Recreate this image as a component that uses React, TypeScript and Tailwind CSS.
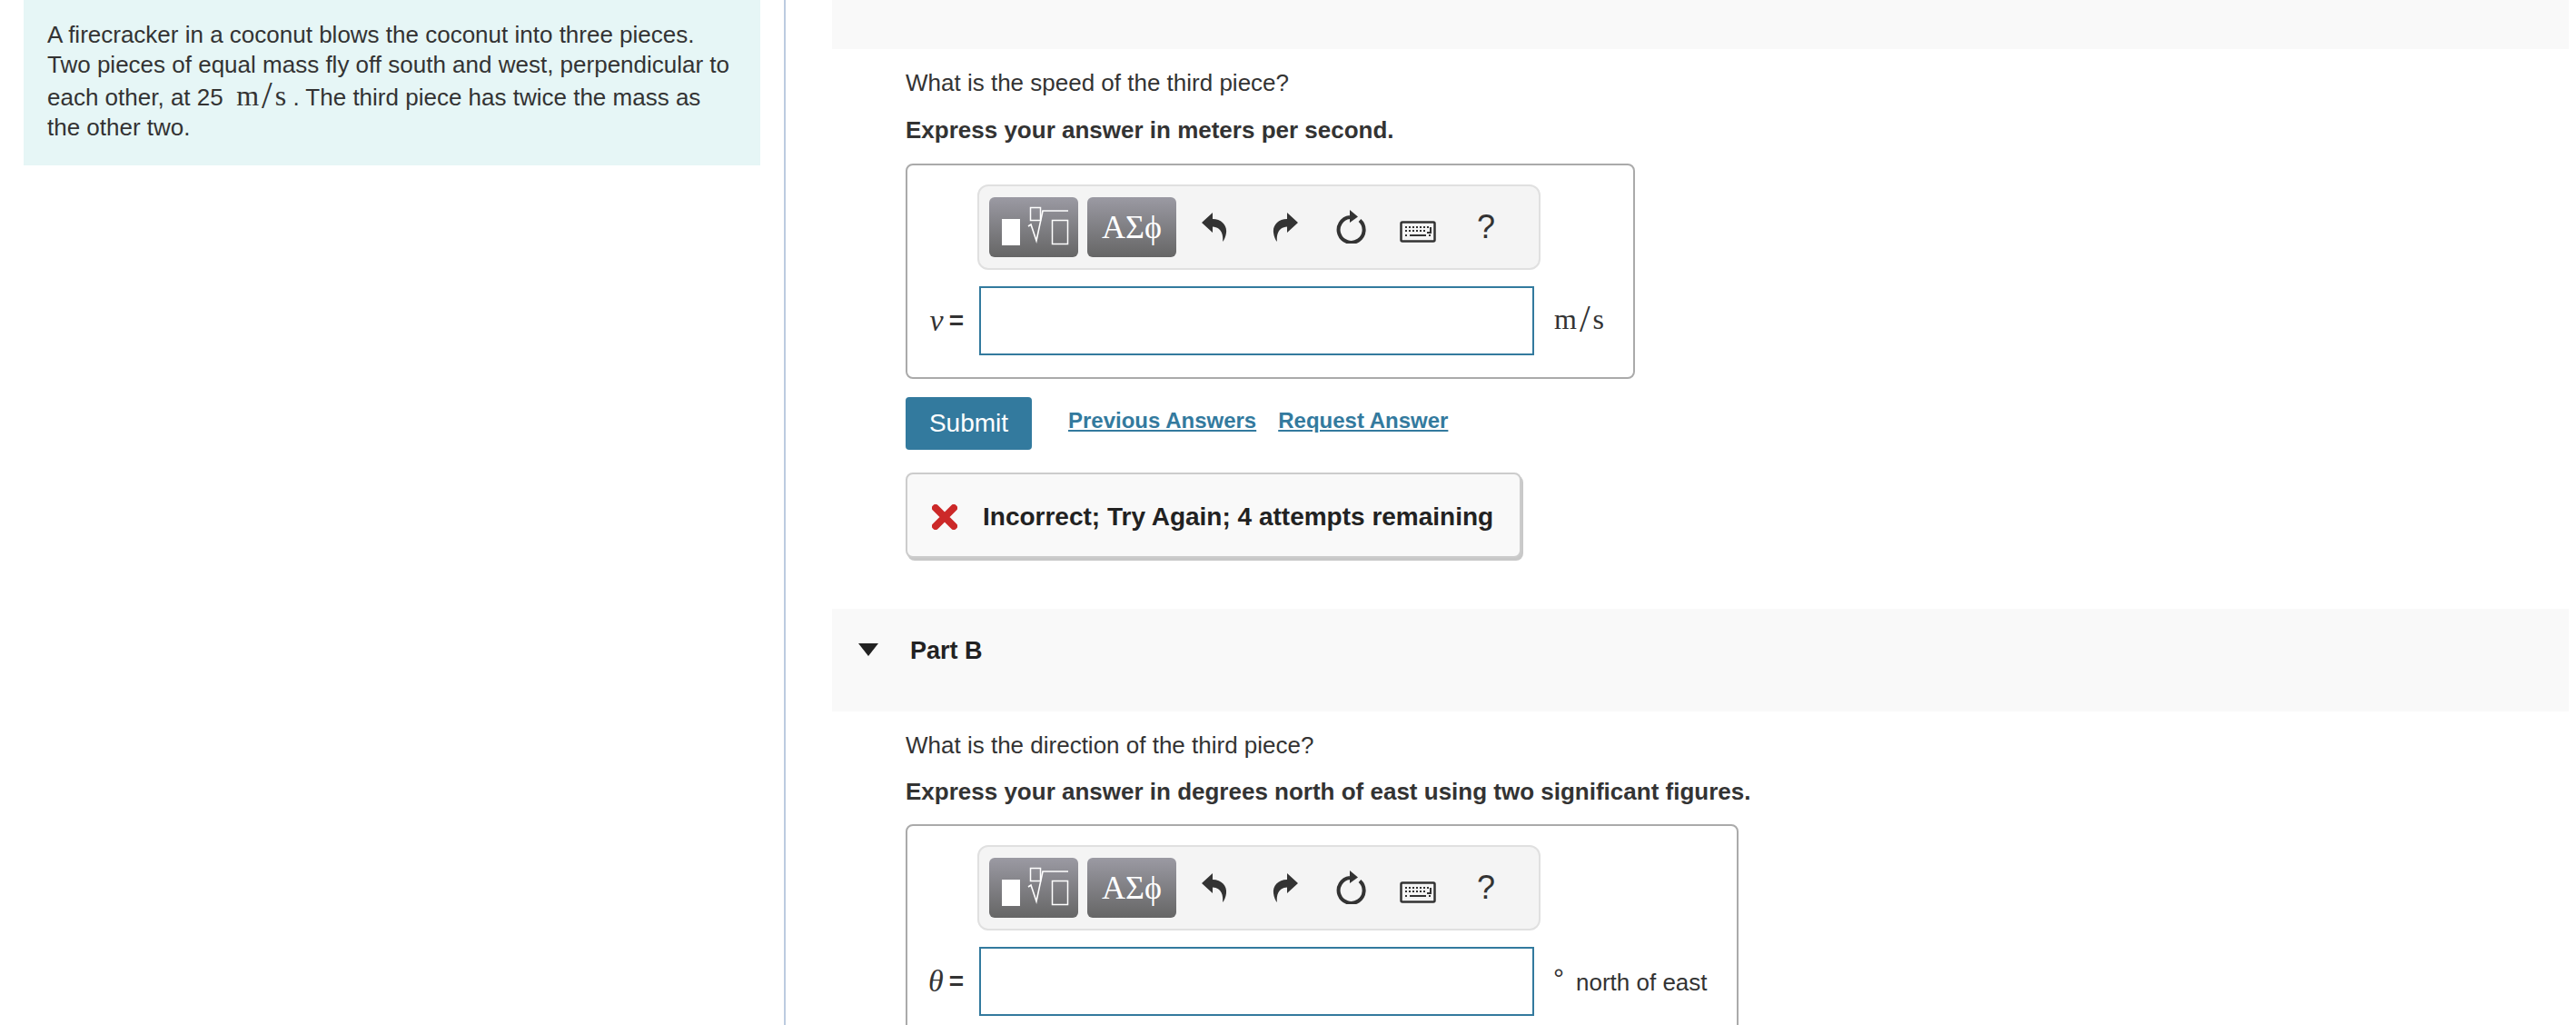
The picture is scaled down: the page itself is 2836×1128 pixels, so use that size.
import React from 'react';

const mathFont = "font-['Liberation_Serif',serif]";

const RootIcon = () => (
  <svg width="98" height="66" viewBox="0 0 98 66" className="block">
    <rect x="14" y="24" width="20" height="29" fill="#fff" />
    <rect x="45.500" y="11.500" width="11" height="14" fill="none" stroke="#fff" strokeWidth="1.500" />
    <path d="M43 32l3-2 6 18 7-33h28" fill="none" stroke="#fff" strokeWidth="1.600" />
    <rect x="69.500" y="25.500" width="17" height="26" fill="none" stroke="#fff" strokeWidth="1.500" />
  </svg>
);

const UndoIcon = ({ flip = false }: { flip?: boolean }) => (
  <svg width="28" height="33" viewBox="0 0 28 33" className={flip ? '-scale-x-100' : ''}>
    <path d="M0 11L12 0v7c10 0 16 7 15 15-.5 4-2 8-4 10 1-7-1-16-11-16.500V22z" fill="#333" />
  </svg>
);

const ResetIcon = () => (
  <svg width="34" height="37" viewBox="0 0 34 37">
    <path d="M27 11.500A14 14 0 1 1 16 8" fill="none" stroke="#333" strokeWidth="4" />
    <path d="M16 0l9 7.500-9 6.500z" fill="#333" />
  </svg>
);

const KeyboardIcon = () => (
  <svg width="40" height="24" viewBox="0 0 40 24">
    <rect x="1.500" y="1.500" width="37" height="21" rx="1.500" fill="#f4f4f4" stroke="#333" strokeWidth="2.500" />
    <path d="M6 7h2M10 7h2M14 7h2M18 7h2M22 7h2M26 7h2M30 7h2M6 11h2M10 11h2M14 11h2M18 11h2M22 11h2M26 11h2M6 16h2M11 16h18M32 16h2M34 7v6h-4" fill="none" stroke="#333" strokeWidth="2" />
  </svg>
);

const Units = () => (
  <span className={`${mathFont} inline-flex h-[20px] items-center text-[32px] leading-[20px]`}>
    m<span className="mx-[3px] text-[42px] font-light leading-[20px]">/</span>s
  </span>
);

const EquationBox = ({ label, unit, width }: { label: string; unit: React.ReactNode; width: string }) => (
  <div className={`${width} h-[237px] rounded-lg border-2 border-[#aaaaaa] bg-white pt-[21px] shrink-0`}>
    <div className="ml-[77px] flex h-[94px] w-[620px] items-center rounded-xl border-2 border-[#e0e0e0] bg-[#f4f4f4] pl-[11px]">
      <div className="h-[66px] w-[98px] rounded-md bg-gradient-to-b from-[#9b9aa3] to-[#666666]">
        <RootIcon />
      </div>
      <div className={`ml-[10px] flex h-[66px] w-[98px] items-center justify-center rounded-md bg-gradient-to-b from-[#9b9aa3] to-[#666666] text-[36px] text-white ${mathFont}`}>
        ΑΣϕ
      </div>
      <div className="ml-[5px] flex w-[74px] justify-center"><UndoIcon /></div>
      <div className="ml-[4px] flex w-[74px] justify-center"><UndoIcon flip /></div>
      <div className="flex w-[70px] justify-center pb-[1px]"><ResetIcon /></div>
      <div className="flex w-[78px] justify-center pt-[10px]"><KeyboardIcon /></div>
      <div className="flex w-[72px] justify-center text-[36px] leading-none text-[#333333]">?</div>
    </div>
    <div className="mt-[17px] flex h-[78px] items-center">
      <div className="flex w-[79px] items-center justify-end pr-[17px] text-[28px] text-[#333333]">
        <i className={`${mathFont} text-[34px] leading-none`}>{label}</i>
        <span className="ml-[6px] font-bold">=</span>
      </div>
      <div className="h-[76px] w-[611px] border-2 border-[#337a9e] bg-white" />
      {unit}
    </div>
  </div>
);

export default function App() {
  return (
    <div className="flex h-[1128px] w-[2836px] overflow-hidden bg-white font-['Liberation_Sans',sans-serif] text-[26px] text-[#333333]">
      {/* Left intro */}
      <div className="h-full w-[865px] shrink-0 border-r-2 border-[#bccbe0] pl-[26px]">
        <div className="h-[182px] w-[811px] bg-[#e6f6f6] px-[26px] pt-[22px] leading-[33px]">
          A firecracker in a coconut blows the coconut into three pieces.
          <br />
          Two pieces of equal mass fly off south and west, perpendicular to
          <span className="mt-[3px] block">
            each other, at 25 &nbsp;<Units /> . The third piece has twice the mass as
          </span>
          the other two.
        </div>
      </div>

      {/* Parts */}
      <div className="ml-[51px] flex w-[1912px] shrink-0 flex-col">
        <div className="h-[54px] w-full shrink-0 bg-[#f9f9f9]" />
        <div className="pl-[81px]">
          <p className="mt-[21px] leading-[32px]">What is the speed of the third piece?</p>
          <p className="mt-[20px] font-bold leading-[32px]">Express your answer in meters per second.</p>
          <div className="mt-[21px]">
            <EquationBox
              label="v"
              width="w-[803px]"
              unit={<span className="ml-[22px]"><Units /></span>}
            />
          </div>
          <div className="mt-[20px] flex items-start">
            <button className="h-[58px] w-[139px] rounded bg-[#337a9e] text-[28px] text-white">Submit</button>
            <a className="ml-[40px] mt-[10px] text-[24px] font-bold leading-[32px] text-[#337a9e] underline" href="#">Previous Answers</a>
            <a className="ml-[24px] mt-[10px] text-[24px] font-bold leading-[32px] text-[#337a9e] underline" href="#">Request Answer</a>
          </div>
          <div className="mt-[25px] flex h-[94px] w-[678px] items-center rounded-lg border-2 border-[#cccccc] bg-[#f9f9f9] pl-[27px] pt-[4px] shadow-[2px_3px_0_#c8c8c8]">
            <svg width="28" height="28" viewBox="0 0 28 28">
              <path d="M4 4l20 20M24 4L4 24" stroke="#cc2929" strokeWidth="8" strokeLinecap="round" />
            </svg>
            <span className="ml-[28px] text-[28px] font-bold text-[#222222]">Incorrect; Try Again; 4 attempts remaining</span>
          </div>
        </div>
        <div className="mt-[56px] flex h-[113px] w-full shrink-0 items-start bg-[#f9f9f9] pl-[29px] pt-[26px]">
          <svg width="22" height="14" viewBox="0 0 22 14" className="mt-[12px]">
            <path d="M0 0h22L11 14z" fill="#222" />
          </svg>
          <span className="ml-[35px] text-[27px] font-bold text-[#222222]">Part B</span>
        </div>
        <div className="pl-[81px]">
          <p className="mt-[21px] leading-[32px]">What is the direction of the third piece?</p>
          <p className="mt-[19px] font-bold leading-[32px]">Express your answer in degrees north of east using two significant figures.</p>
          <div className="mt-[20px]">
            <EquationBox
              label="θ"
              width="w-[917px]"
              unit={
                <span className="relative ml-[46px] pt-[2px]">
                  <span className="absolute -left-[25px] -top-[6px] text-[30px]">°</span>north of east
                </span>
              }
            />
          </div>
        </div>
      </div>
    </div>
  );
}
